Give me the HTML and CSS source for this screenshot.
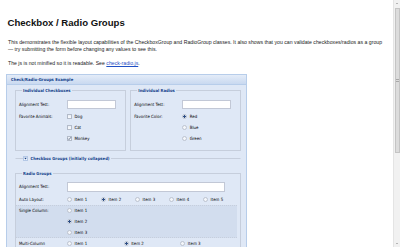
FILE: index.html
```html
<!DOCTYPE html>
<html>
<head>
<meta charset="utf-8">
<title>Checkbox / Radio Groups</title>
<link rel="stylesheet" href="styles.css">
</head>
<body>
<div class="page">
  <h1>Checkbox / Radio Groups</h1>
  <p class="intro">This demonstrates the flexible layout capabilities of the CheckboxGroup and RadioGroup classes. It also shows that you can validate checkboxes/radios as a group — try submitting the form before changing any values to see this.</p>
  <p class="note">The js is not minified so it is readable. See <a href="#">check-radio.js</a>.</p>

  <div class="panel">
    <div class="panel-header">Check/Radio-Groups Example</div>
    <div class="panel-body">
      <div class="cols">
        <fieldset class="fs">
          <legend>Individual Checkboxes</legend>
          <div class="row row-input"><span class="lbl">Alignment Test:</span><span class="input"></span></div>
          <div class="row"><span class="lbl">Favorite Animals:</span>
            <div class="opts">
              <span class="opt"><span class="cb"></span>Dog</span>
              <span class="opt"><span class="cb"></span>Cat</span>
              <span class="opt"><span class="cb checked"><svg viewBox="0 0 5 5"><path d="M1 2.6 L2 3.6 L4 1.2" /></svg></span>Monkey</span>
            </div>
          </div>
        </fieldset>
        <fieldset class="fs">
          <legend>Individual Radios</legend>
          <div class="row row-input"><span class="lbl">Alignment Test:</span><span class="input"></span></div>
          <div class="row"><span class="lbl">Favorite Color:</span>
            <div class="opts">
              <span class="opt"><span class="rd on"></span>Red</span>
              <span class="opt"><span class="rd"></span>Blue</span>
              <span class="opt"><span class="rd"></span>Green</span>
            </div>
          </div>
        </fieldset>
      </div>

      <fieldset class="fs collapsed">
        <legend><span class="toggle"><svg viewBox="0 0 5 5"><path d="M1.2 1.8 L3.8 1.8 L2.5 3.4 Z" /></svg></span>Checkbox Groups (initially collapsed)</legend>
      </fieldset>

      <fieldset class="fs radio-groups">
        <legend>Radio Groups</legend>
        <div class="row row-input"><span class="lbl">Alignment Test:</span><span class="input wide"></span></div>
        <div class="row"><span class="lbl">Auto Layout:</span>
          <div class="grid5">
            <span class="opt"><span class="rd"></span>Item 1</span>
            <span class="opt"><span class="rd on"></span>Item 2</span>
            <span class="opt"><span class="rd"></span>Item 3</span>
            <span class="opt"><span class="rd"></span>Item 4</span>
            <span class="opt"><span class="rd"></span>Item 5</span>
          </div>
        </div>
        <div class="row alt"><span class="lbl">Single Column:</span>
          <div class="opts">
            <span class="opt"><span class="rd"></span>Item 1</span>
            <span class="opt"><span class="rd on"></span>Item 2</span>
            <span class="opt"><span class="rd"></span>Item 3</span>
          </div>
        </div>
        <div class="row"><span class="lbl">Multi-Column</span>
          <div class="grid3">
            <span class="opt"><span class="rd"></span>Item 1</span>
            <span class="opt"><span class="rd on"></span>Item 2</span>
            <span class="opt"><span class="rd"></span>Item 3</span>
          </div>
        </div>
      </fieldset>
    </div>
  </div>
</div>

<div class="sb">
  <div class="sb-btn up"></div>
  <div class="sb-track"><div class="sb-thumb"><span class="grip"></span></div></div>
  <div class="sb-btn down"></div>
</div>
</body>
</html>
```

FILE: styles.css
```css
html, body {
  margin: 0;
  padding: 0;
  overflow: hidden;
  background: #fff;
}
body {
  width: 400px;
  height: 247px;
}
.page {
  width: 393px;
  box-sizing: border-box;
  padding: 0 6px;
}
h1 {
  margin: 16.7px 0 0 1.5px;
  font: bold 9.6px/11px "Liberation Sans", Arial, sans-serif;
  color: #111;
}
.intro, .note {
  margin: 11.4px 0 0 2px;
  width: 379px;
  font: 5.18px/7.3px "Liberation Sans", Arial, sans-serif;
  color: #222;
}
.note {
  margin-top: 6px;
}
.note a {
  color: #1f4fc4;
}

/* panel */
.panel {
  margin-top: 7px;
  width: 241px;
  box-sizing: border-box;
  border: 1px solid #b7cdea;
}
.panel-header {
  height: 10px;
  box-sizing: border-box;
  padding-left: 4px;
  background: linear-gradient(#e4ecf8, #c9d9f0);
  border-bottom: 1px solid #b7cdea;
  font: bold 4.2px/9px "DejaVu Sans Condensed", "DejaVu Sans", sans-serif;
  color: #15428b;
}
.panel-body {
  background: #dfe8f6;
  padding: 3.5px 5px 20px 8px;
  font: 4.35px/11px "DejaVu Sans Condensed", "DejaVu Sans", sans-serif;
  color: #000;
}
.cols {
  display: grid;
  grid-template-columns: 1fr 1fr;
  gap: 4.5px;
}
.fs {
  margin: 0;
  min-width: 0;
  padding: 6.5px 3px 5.5px 3px;
  border: 1px solid #c6cedc;
}
.fs legend {
  margin-left: 2.5px;
  padding: 0 1.5px;
  font: bold 4.2px/5px "DejaVu Sans Condensed", "DejaVu Sans", sans-serif;
  color: #15428b;
}
.row {
  display: flex;
  align-items: flex-start;
}
.row-input {
  align-items: center;
  height: 9.5px;
  margin-bottom: 2px;
}
.lbl {
  flex: none;
  width: 48px;
  line-height: 11px;
}
.row-input .lbl {
  line-height: 9.5px;
}
.input {
  width: 48.5px;
  height: 9.5px;
  box-sizing: border-box;
  background: #fff;
  border: 1px solid #c2c8d6;
}
.input.wide {
  width: 158px;
}
.opts {
  display: flex;
  flex-direction: column;
}
.opt {
  display: flex;
  align-items: center;
  gap: 2.5px;
  height: 11px;
  white-space: nowrap;
}
.cb {
  width: 5px;
  height: 5px;
  box-sizing: border-box;
  border: 1px solid #b3bbc9;
  background: linear-gradient(#e9eef6, #fbfcfe);
  display: flex;
}
.cb svg {
  width: 5px;
  height: 5px;
  margin: -1px;
}
.cb svg path {
  fill: none;
  stroke: #4a5a78;
  stroke-width: 0.8;
}
.rd {
  width: 5px;
  height: 5px;
  box-sizing: border-box;
  border-radius: 50%;
  border: 1px solid #bcc3cf;
  background: #f4f6fa;
}
.rd.on {
  background: radial-gradient(circle, #2e4f86 0 1.1px, #e8edf5 1.4px);
}

/* collapsed fieldset */
.collapsed {
  margin-top: 5px;
  padding: 0 3px;
  border-width: 1px 1px 0;
  border-left-color: transparent;
  border-right-color: transparent;
}
.collapsed legend {
  display: flex;
  align-items: center;
  gap: 2.5px;
  margin-left: 4px;
  padding: 0 1px 0 0;
  line-height: 6px;
}
.toggle {
  width: 5px;
  height: 5px;
  box-sizing: border-box;
  border: 1px solid #b4c8e6;
  background: #f2f6fc;
  display: flex;
}
.toggle svg {
  width: 5px;
  height: 5px;
  margin: -1px;
}
.toggle svg path {
  fill: #15428b;
}

/* radio groups */
.radio-groups {
  margin-top: 9.5px;
  padding-top: 6px;
}
.grid5 {
  flex: 1;
  display: grid;
  grid-template-columns: repeat(5, 1fr);
}
.grid3 {
  flex: 1;
  display: grid;
  grid-template-columns: repeat(3, 1fr);
}
.alt {
  margin-left: -3px;
  padding-left: 3px;
  background: #d2ddee;
  border-top: 1px dotted #c6cedc;
  border-bottom: 1px dotted #c6cedc;
  margin-top: 0.5px;
}
.alt .opts, .alt .lbl {
  margin-top: -1px;
  margin-bottom: -1px;
}

/* scrollbar */
.sb {
  position: fixed;
  top: 0;
  right: 0;
  width: 7px;
  height: 247px;
  box-sizing: border-box;
  display: flex;
  flex-direction: column;
  background: #f1f1f1;
  border-left: 1px solid #e4e4e4;
}
.sb-btn {
  flex: none;
  height: 7px;
  display: flex;
  align-items: center;
  justify-content: center;
}
.sb-btn::before {
  content: "";
  border-left: 1.5px solid transparent;
  border-right: 1.5px solid transparent;
}
.up::before {
  border-bottom: 1.5px solid #7a7a7a;
}
.down::before {
  border-top: 1.5px solid #7a7a7a;
}
.sb-track {
  flex: 1;
  padding-top: 1px;
}
.sb-thumb {
  height: 145px;
  box-sizing: border-box;
  margin: 0 0.5px;
  background: #dcdcdc;
  border: 1px solid #c4c4c4;
  display: flex;
  align-items: center;
  justify-content: center;
}
.grip {
  width: 3px;
  height: 3px;
  border-top: 1px solid #a8a8a8;
  border-bottom: 1px solid #a8a8a8;
  box-sizing: border-box;
}
```
